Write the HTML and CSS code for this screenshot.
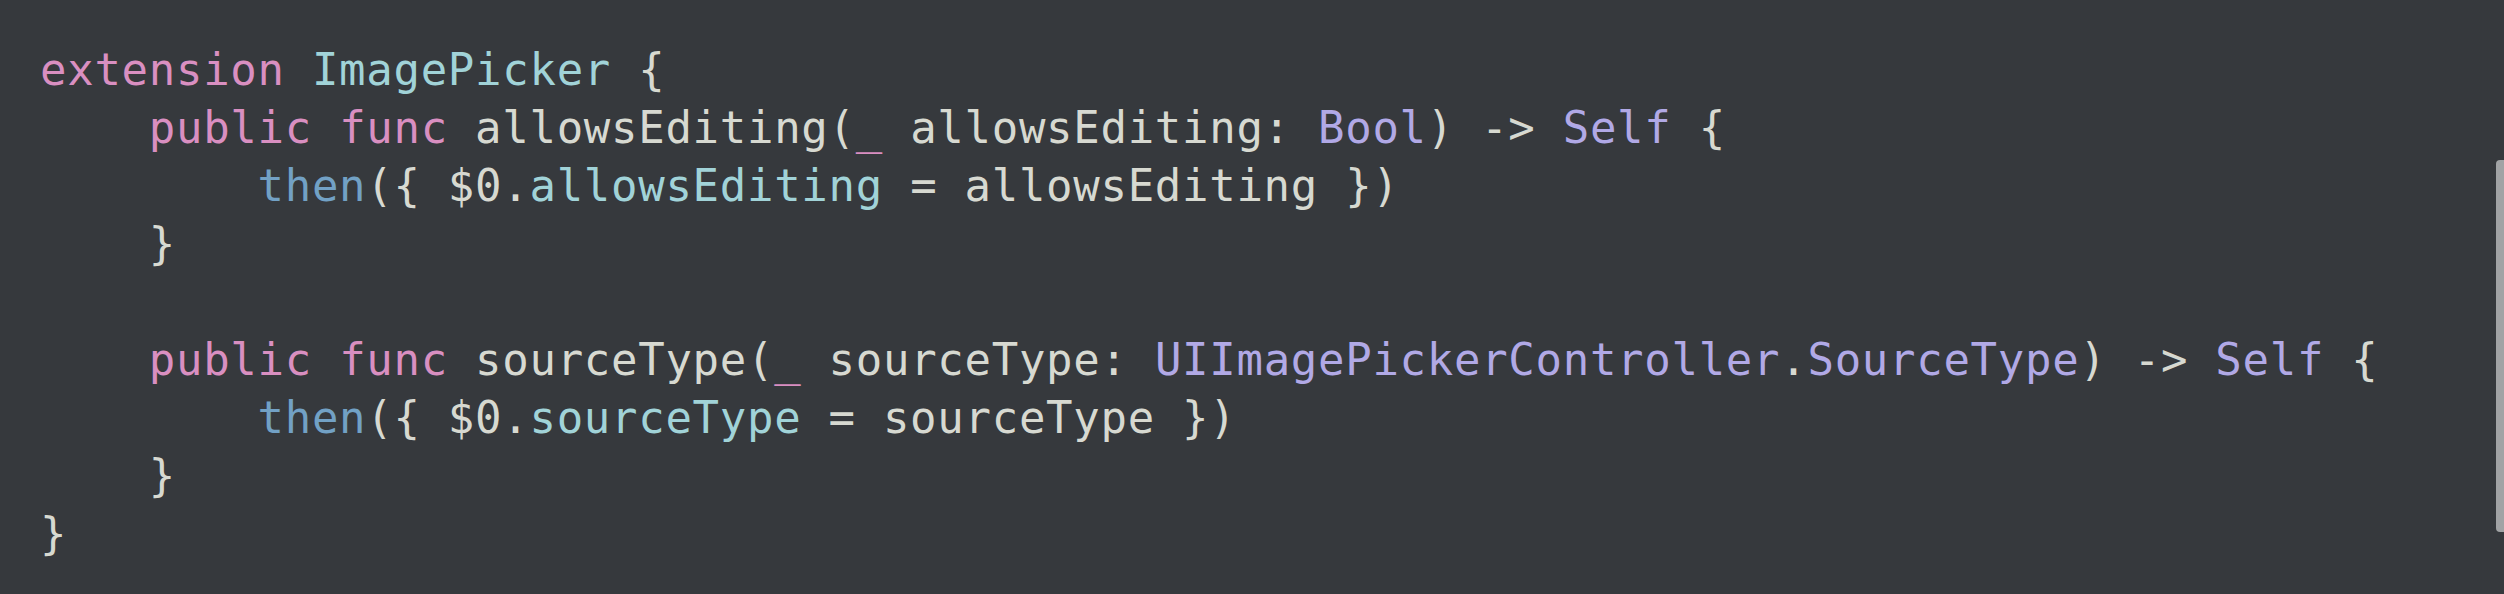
FILE: index.html
```html
<!DOCTYPE html>
<html lang="en">
<head>
<meta charset="utf-8">
<title>ImagePicker extension</title>
<link rel="stylesheet" href="styles.css">
</head>
<body>
<div class="editor">
<pre class="code"><code><span class="kw">extension</span> <span class="ty">ImagePicker</span> {
    <span class="kw">public</span> <span class="kw">func</span> allowsEditing(<span class="kw">_</span> allowsEditing: <span class="sys">Bool</span>) -&gt; <span class="sys">Self</span> {
        <span class="fn">then</span>({ $0.<span class="ty">allowsEditing</span> = allowsEditing })
    }

    <span class="kw">public</span> <span class="kw">func</span> sourceType(<span class="kw">_</span> sourceType: <span class="sys">UIImagePickerController</span>.<span class="sys">SourceType</span>) -&gt; <span class="sys">Self</span> {
        <span class="fn">then</span>({ $0.<span class="ty">sourceType</span> = sourceType })
    }
}</code></pre>
<div class="scrollbar"></div>
</div>
</body>
</html>
```
FILE: styles.css
```css
html, body {
  margin: 0;
  padding: 0;
  background: #36393d;
}
.editor {
  position: relative;
  width: 2504px;
  height: 594px;
  background: #36393d;
  overflow: hidden;
}
.code {
  margin: 0;
  padding: 41px 0 0 40px;
  font-family: "DejaVu Sans Mono", monospace;
  font-size: 44px;
  letter-spacing: 0.7px;
  line-height: 58px;
  color: #d7d9d1;
  white-space: pre;
}
.kw { color: #d98fc1; }
.ty { color: #a1d3d8; }
.fn { color: #72a1c5; }
.sys { color: #b1a9e6; }
.scrollbar {
  position: absolute;
  left: 2496px;
  top: 160px;
  width: 8px;
  height: 372px;
  background: #a1a3a5;
  border-radius: 4px 0 0 4px;
}
```
